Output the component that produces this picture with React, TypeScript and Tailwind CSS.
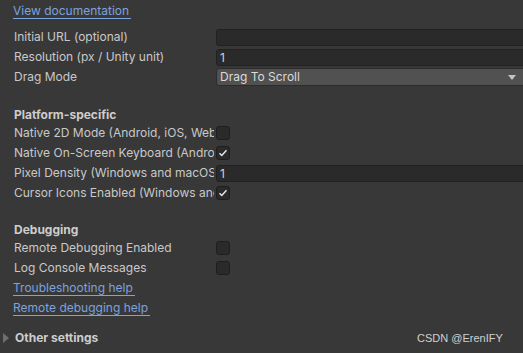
const font = { fontFamily: 'Inter, "Noto Sans", sans-serif' }

const labelCls = 'w-[216px] shrink-0 pl-[14px] pr-[2px] text-[12px] text-[#c9c9c9]'
const fieldCls = 'flex-1 mr-[-6px] h-[17px] rounded-[3px] border border-[#212121] bg-[#2a2a2a] pl-[3px] text-[12px] leading-[15px] text-[#d2d2d2]'

function Check({ on }: { on?: boolean }) {
  return (
    <div className="flex h-[14px] w-[14px] items-center justify-center rounded-[3px] border border-[#1e1e1e] bg-[#2a2a2a]">
      {on && (
        <svg width="10" height="10" viewBox="0 0 10 10">
          <polyline points="1.5,5.2 3.8,7.5 8.5,2.2" fill="none" stroke="#e6e6e6" strokeWidth="1.5" />
        </svg>
      )}
    </div>
  )
}

function Row({ label, children }: { label: string; children?: React.ReactNode }) {
  return (
    <div className="flex h-5 items-center">
      <div className={labelCls}>
        <div className="overflow-hidden whitespace-nowrap">{label}</div>
      </div>
      {children}
    </div>
  )
}

function Link({ text }: { text: string }) {
  return (
    <div className="flex h-5 items-center pl-[13px]">
      <span className="border-b border-[#7ba3df] text-[12px] leading-[14px] text-[#7ba3df] pr-[2px]">{text}</span>
    </div>
  )
}

export default function App() {
  return (
    <div className="relative h-[353px] w-[523px] overflow-hidden bg-[#383838]" style={font}>
      <div className="pt-[1px]">
        <Link text="View documentation" />
      </div>

      <div className="mt-[6px]">
        <Row label="Initial URL (optional)">
          <div className={fieldCls} />
        </Row>
        <Row label="Resolution (px / Unity unit)">
          <div className={fieldCls}>1</div>
        </Row>
        <Row label="Drag Mode">
          <div className="mr-[-6px] flex h-[18px] flex-1 items-center justify-between rounded-[3px] border border-[#2c2c2c] bg-[#515151] pl-[3px] pr-[12px] text-[12px] text-[#dadada]">
            <span>Drag To Scroll</span>
            <svg width="8" height="5" viewBox="0 0 8 5">
              <polygon points="0,0 8,0 4,5" fill="#c4c4c4" />
            </svg>
          </div>
        </Row>
      </div>

      <div className="mt-[19px] flex h-[17px] items-center pl-[14px] text-[12px] font-bold text-[#cdcdcd]">Platform-specific</div>
      <Row label="Native 2D Mode (Android, iOS, WebGL)">
        <Check />
      </Row>
      <Row label="Native On-Screen Keyboard (Android, iOS, WebGL)">
        <Check on />
      </Row>
      <Row label="Pixel Density (Windows and macOS only)">
        <div className={fieldCls}>1</div>
      </Row>
      <Row label="Cursor Icons Enabled (Windows and macOS only)">
        <Check on />
      </Row>

      <div className="mt-[18px] flex h-[17px] items-center pl-[14px] text-[12px] font-bold text-[#cdcdcd]">Debugging</div>
      <Row label="Remote Debugging Enabled">
        <Check />
      </Row>
      <Row label="Log Console Messages">
        <Check />
      </Row>
      <Link text="Troubleshooting help" />
      <Link text="Remote debugging help" />

      <div className="mt-[10px] flex h-5 items-center">
        <svg width="14" height="20" viewBox="0 0 14 20" className="ml-[1px]">
          <polygon points="2,5 8,10 2,15" fill="#6e6e6e" />
        </svg>
        <span className="text-[12px] font-bold text-[#cdcdcd]">Other settings</span>
      </div>

      <div
        className="absolute left-[417px] top-[330px] text-[11px] text-[#d0d0d0]"
        style={{ fontFamily: '"Liberation Sans", Arial, sans-serif' }}
      >
        CSDN @ErenIFY
      </div>
    </div>
  )
}
